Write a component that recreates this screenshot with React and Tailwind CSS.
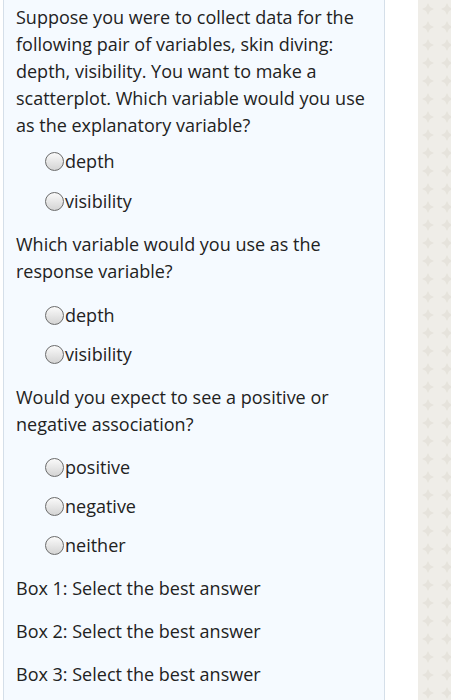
import React from "react";

const Radio = ({ label }) => (
  <div className="flex items-center h-[20px]">
    <span className="w-[19px] h-[19px] rounded-full border border-[#6b6b6b] bg-gradient-to-b from-[#fafafa] to-[#d4d4d4] shrink-0" />
    <span className="ml-[1px]">{label}</span>
  </div>
);

const Pattern = () => (
  <svg width="33" height="700" className="block">
    <defs>
      <pattern id="pl" width="33" height="18" patternUnits="userSpaceOnUse">
        <path d="M10 3 L12 7 L16 9 L12 11 L10 15 L8 11 L4 9 L8 7 Z" fill="#e6e3dc" />
        <path d="M29 3 L31 7 L35 9 L31 11 L29 15 L27 11 L23 9 L27 7 Z" fill="#e6e3dc" />
      </pattern>
    </defs>
    <rect width="33" height="700" fill="#efede8" />
    <rect width="33" height="700" fill="url(#pl)" />
  </svg>
);

export default function App() {
  return (
    <div className="flex w-[451px] h-[700px] overflow-hidden bg-white">
      <div
        className="w-[382px] ml-[3px] shrink-0 bg-[#f5faff] border-l border-r border-[#d5dfe9] pl-[12px] pr-[8px] pt-[4px] text-[18px] leading-[27px] text-[#222]"
        style={{ fontFamily: '"Open Sans", sans-serif' }}
      >
        <p>
          Suppose you were to collect data for the following pair of variables, skin diving: depth, visibility. You want to make a scatterplot. Which variable would you use as the explanatory variable?
        </p>
        <div className="pl-[29px] mt-[12px] flex flex-col gap-[20px]">
          <Radio label="depth" />
          <Radio label="visibility" />
        </div>
        <p className="mt-[20px]">Which variable would you use as the response variable?</p>
        <div className="pl-[29px] mt-[20px] flex flex-col gap-[19px]">
          <Radio label="depth" />
          <Radio label="visibility" />
        </div>
        <p className="mt-[20px]">Would you expect to see a positive or negative association?</p>
        <div className="pl-[29px] mt-[19px] flex flex-col gap-[19px]">
          <Radio label="positive" />
          <Radio label="negative" />
          <Radio label="neither" />
        </div>
        <div className="mt-[20px] flex flex-col gap-[16px]">
          <p>Box 1: Select the best answer</p>
          <p>Box 2: Select the best answer</p>
          <p>Box 3: Select the best answer</p>
        </div>
      </div>
      <div className="w-[33px] shrink-0 bg-white" />
      <div className="flex-1">
        <Pattern />
      </div>
    </div>
  );
}
